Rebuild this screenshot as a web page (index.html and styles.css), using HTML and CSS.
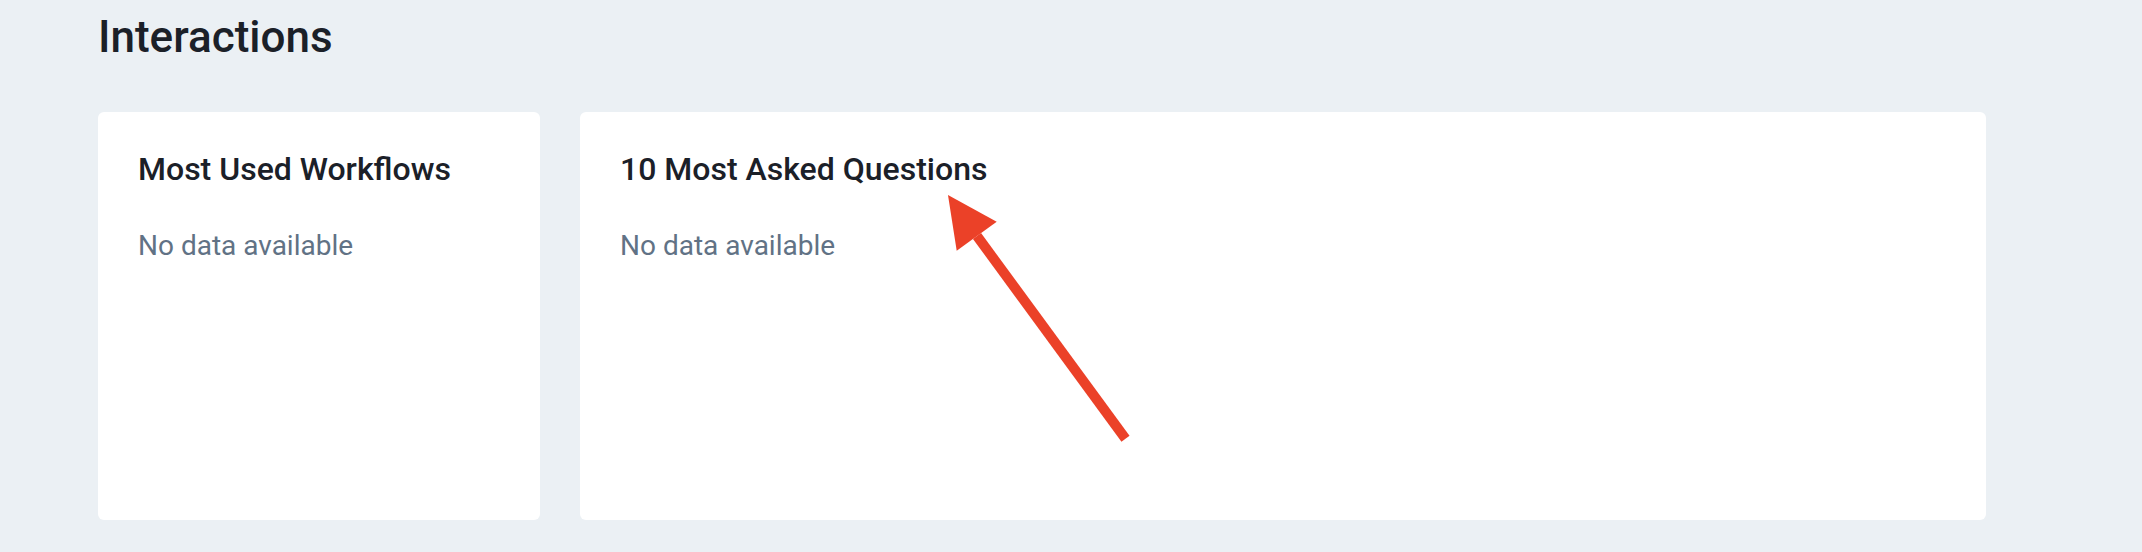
FILE: index.html
```html
<!DOCTYPE html>
<html lang="en">
<head>
    <meta charset="UTF-8">
    <meta name="viewport" content="width=device-width, initial-scale=1.0">
    <title>Interactions</title>
    <link rel="stylesheet" href="styles.css">
</head>
<body>
    <div class="page">
        <h1>Interactions</h1>
        <div class="cards">
            <div class="card card-small">
                <h2>Most Used Workflows</h2>
                <p class="empty">No data available</p>
            </div>
            <div class="card card-wide">
                <h2>10 Most Asked Questions</h2>
                <p class="empty">No data available</p>
            </div>
        </div>
    </div>

    <svg class="annotation" viewBox="0 0 2142 552" width="2142" height="552">
        <line x1="977" y1="236" x2="1125.5" y2="438.7" stroke="#eb4128" stroke-width="10"/>
        <polygon points="948,195 996.7,221.7 956.7,250.7" fill="#eb4128"/>
    </svg>
</body>
</html>
```

FILE: styles.css
```css
body {
    font-family: Roboto, "Liberation Sans", Arial, sans-serif;
    background-color: #ebf0f4;
    color: #1b2028;
    margin: 0;
    padding: 0;
}

.page {
    padding: 11px 0 0 98px;
    width: 1888px;
}

h1 {
    font-size: 44px;
    font-weight: 500;
    line-height: 52px;
    margin: 0 0 49px 0;
}

.cards {
    display: flex;
    gap: 40px;
}

.card {
    background-color: #ffffff;
    border-radius: 6px;
    height: 408px;
    box-sizing: border-box;
    padding: 39px 40px;
}

.card-small {
    width: 442px;
}

.card-wide {
    width: 1406px;
}

.card h2 {
    font-size: 32px;
    font-weight: 500;
    line-height: 36px;
    margin: 0 0 41px 0;
}

.empty {
    font-size: 28px;
    line-height: 36px;
    color: #617285;
    margin: 0;
}

.annotation {
    position: absolute;
    left: 0;
    top: 0;
    pointer-events: none;
}
```
